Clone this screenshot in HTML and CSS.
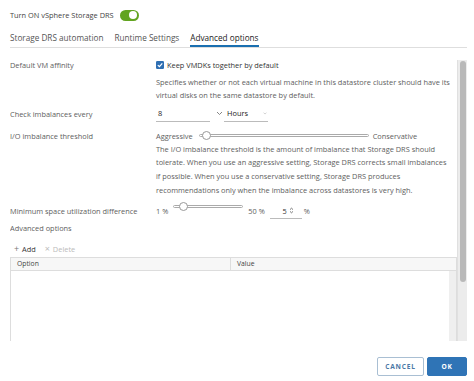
FILE: index.html
```html
<!DOCTYPE html>
<html lang="en">
<head>
    <meta charset="UTF-8">
    <title>Edit Storage DRS settings</title>
    <link rel="stylesheet" href="styles.css">
</head>
<body>
    <div class="dialog">
        <div class="drs_switch">
            <span>Turn ON vSphere Storage DRS</span>
            <span class="toggle"><span class="knob"></span></span>
        </div>
        <div class="tabs">
            <a href="javascript:;">Storage DRS automation</a>
            <a href="javascript:;">Runtime Settings</a>
            <a href="javascript:;" class="active">Advanced options</a>
        </div>
        <div class="body">
            <div class="form">
                <div class="row r1">
                    <div class="label">Default VM affinity</div>
                    <div class="ctrl">
                        <span class="check">
                            <svg width="8" height="8" viewBox="0 0 8 8"><rect width="8" height="8" rx="1.2" fill="#2f6fb3"/><polyline points="1.8,4.1 3.4,5.6 6.3,2.4" fill="none" stroke="#fff" stroke-width="1.2"/></svg>
                        </span>
                        <span class="dark">Keep VMDKs together by default</span>
                    </div>
                </div>
                <p class="desc d1">Specifies whether or not each virtual machine in this datastore cluster should have its<br>virtual disks on the same datastore by default.</p>
                <div class="row r2">
                    <div class="label">Check imbalances every</div>
                    <div class="ctrl">
                        <div class="select num"><span>8</span></div>
                        <svg class="chev" width="7" height="5" viewBox="0 0 7 5"><polyline points="1,1 3.5,3.5 6,1" fill="none" stroke="#777" stroke-width="0.9"/></svg>
                        <div class="select unit"><span>Hours</span>
                            <svg class="chev" width="7" height="5" viewBox="0 0 7 5"><polyline points="1,1 3.5,3.5 6,1" fill="none" stroke="#aaa" stroke-width="0.9"/></svg>
                        </div>
                    </div>
                </div>
                <div class="row r3">
                    <div class="label">I/O imbalance threshold</div>
                    <div class="ctrl">
                        <span>Aggressive</span>
                        <div class="slider long"><span class="thumb"></span></div>
                        <span>Conservative</span>
                    </div>
                </div>
                <p class="desc d2">The I/O imbalance threshold is the amount of imbalance that Storage DRS should<br>tolerate. When you use an aggressive setting, Storage DRS corrects small imbalances<br>if possible. When you use a conservative setting, Storage DRS produces<br>recommendations only when the imbalance across datastores is very high.</p>
                <div class="row r4">
                    <div class="label">Minimum space utilization difference</div>
                    <div class="ctrl">
                        <span>1 %</span>
                        <div class="slider short"><span class="thumb"></span></div>
                        <span>50 %</span>
                        <div class="number"><span class="dark">5</span>
                            <svg width="5" height="7" viewBox="0 0 5 7"><polyline points="1,2.6 2.5,1.2 4,2.6" fill="none" stroke="#555" stroke-width="0.8"/><polyline points="1,4.4 2.5,5.8 4,4.4" fill="none" stroke="#555" stroke-width="0.8"/></svg>
                        </div>
                        <span>%</span>
                    </div>
                </div>
                <div class="row r5">
                    <div class="label">Advanced options</div>
                </div>
                <div class="actions">
                    <span class="add"><b>+</b> Add</span>
                    <span class="del"><b>×</b> Delete</span>
                </div>
                <div class="grid">
                    <div class="grid_head">
                        <div class="col1">Option</div>
                        <div class="col2">Value</div>
                    </div>
                    <div class="grid_body">
                        <div class="rows"></div>
                        <div class="inner_bar"></div>
                    </div>
                </div>
            </div>
            <div class="vbar"><div class="vthumb"></div></div>
        </div>
        <div class="footer">
            <a href="javascript:;" class="btn cancel">CANCEL</a>
            <a href="javascript:;" class="btn ok">OK</a>
        </div>
    </div>
</body>
</html>
```
FILE: styles.css
```css
* {
    margin: 0;
    padding: 0;
    box-sizing: border-box;
}

body {
    width: 474px;
    height: 381px;
    background: #fff;
    font-family: "Open Sans", "Liberation Sans", sans-serif;
    font-size: 7.4px;
    color: #5e5e5e;
    overflow: hidden;
}

body a {
    text-decoration: none;
}

.dialog {
    padding: 9px 7px 0 10px;
}

.drs_switch {
    display: flex;
    align-items: center;
    gap: 6px;
    height: 12px;
    color: #444;
}

.toggle {
    width: 19px;
    height: 11px;
    border-radius: 6px;
    background: #62a420;
    position: relative;
}

.toggle .knob {
    position: absolute;
    right: 1.5px;
    top: 1.5px;
    width: 8px;
    height: 8px;
    border-radius: 50%;
    background: #fff;
}

.tabs {
    display: flex;
    gap: 11px;
    margin-top: 8px;
    height: 19px;
    border-bottom: 1px solid #dedede;
    font-size: 8.2px;
}

.tabs a {
    color: #555;
    line-height: 17px;
    border-bottom: 2px solid transparent;
}

.tabs a.active {
    color: #222;
    border-bottom-color: #1a6fb0;
}

.body {
    display: flex;
    height: 293px;
}

.form {
    flex: 1;
    padding-top: 10px;
    overflow: hidden;
}

.row {
    display: flex;
    align-items: center;
}

.label {
    width: 146px;
    flex-shrink: 0;
}

.ctrl {
    display: flex;
    align-items: center;
}

.dark {
    color: #333;
}

.r1 {
    height: 14px;
}

.check {
    display: flex;
    margin-right: 3px;
}

.desc {
    margin-left: 146px;
    line-height: 13.3px;
}

.d1 {
    margin-top: 4px;
}

.r2 {
    margin-top: 3px;
    height: 16px;
}

.select {
    height: 16px;
    display: flex;
    align-items: center;
    border-bottom: 1px solid #bbb;
    color: #222;
}

.select.num {
    width: 54px;
    padding-left: 2px;
}

.r2 .chev {
    margin: 0 1px 0 6px;
}

.select.unit {
    width: 44px;
    padding-left: 3px;
    gap: 9px;
}

.r3 {
    margin-top: 7px;
    height: 14px;
}

.slider {
    height: 3px;
    border: 1px solid #aaa;
    border-radius: 2px;
    position: relative;
    background: #fff;
}

.slider.long {
    width: 170px;
    margin: 0 4px 0 6px;
}

.slider .thumb {
    position: absolute;
    top: -4px;
    width: 9px;
    height: 9px;
    border: 1px solid #999;
    border-radius: 50%;
    background: #fff;
}

.slider.long .thumb {
    left: 2px;
}

.d2 {
    line-height: 13.7px;
}

.r4 {
    margin-top: 6px;
    height: 16px;
}

.slider.short {
    width: 70px;
    margin: 0 5px 9px 5px;
}

.slider.short .thumb {
    left: 5px;
}

.number {
    width: 32px;
    height: 16px;
    margin: 0 2px 0 5px;
    display: flex;
    align-items: center;
    justify-content: flex-end;
    gap: 2px;
    border-bottom: 1px solid #bbb;
    padding-right: 8px;
    color: #222;
}

.r5 {
    margin-top: 2px;
    height: 14px;
}

.actions {
    display: flex;
    gap: 9px;
    height: 14px;
    margin-top: 6px;
    align-items: center;
    padding-left: 4px;
}

.actions b {
    font-weight: normal;
    font-size: 9px;
    margin-right: 1px;
}

.add {
    color: #333;
}

.add b {
    color: #777;
}

.del {
    color: #bbb;
}

.grid {
    margin-top: 2px;
    border: 1px solid #ddd;
    border-bottom: none;
}

.grid_head {
    display: flex;
    height: 13px;
    background: #f7f7f7;
    border-bottom: 1px solid #ddd;
    color: #444;
    font-size: 6.8px;
    line-height: 12px;
}

.grid_head .col1 {
    width: 220px;
    padding-left: 6px;
    border-right: 1px solid #ddd;
}

.grid_head .col2 {
    padding-left: 6px;
}

.grid_body {
    display: flex;
    height: 90px;
}

.grid_body .rows {
    flex: 1;
}

.grid_body .inner_bar {
    width: 7px;
    background: #efefef;
}

.vbar {
    width: 10px;
    margin-top: 12px;
    background: #ececec;
    border-left: 1px solid #e0e0e0;
    display: flex;
    justify-content: center;
    padding-top: 1px;
}

.vthumb {
    width: 6px;
    height: 221px;
    border-radius: 3px;
    background: #b9b9b9;
}

.footer {
    display: flex;
    justify-content: flex-end;
    gap: 3px;
    margin-top: 16px;
}

.btn {
    height: 19px;
    line-height: 17px;
    border: 1px solid #a9bfd3;
    border-radius: 2px;
    text-align: center;
    font-size: 6.6px;
    font-weight: bold;
    letter-spacing: 0.8px;
}

.cancel {
    width: 47px;
    color: #4b78a6;
    background: #fff;
}

.ok {
    width: 40px;
    background: #2f74b6;
    border-color: #2f74b6;
    color: #fff;
}
```
